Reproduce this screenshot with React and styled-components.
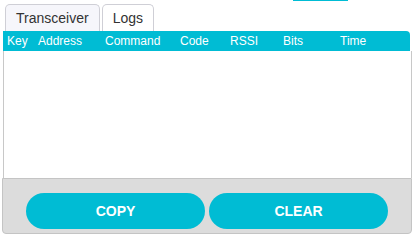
import React from "react";
import styled, { createGlobalStyle } from "styled-components";

const GlobalStyle = createGlobalStyle`
  html, body {
    margin: 0;
    padding: 0;
    background: #ffffff;
    font-family: "Liberation Sans", Arial, sans-serif;
  }
`;

const Page = styled.div`
  width: 415px;
  height: 238px;
  overflow: hidden;
  background: #ffffff;
`;

const TopStrip = styled.div`
  height: 4px;
  display: flex;
  align-items: flex-start;
`;

const TopMarker = styled.div`
  margin-left: 293px;
  width: 55px;
  height: 1px;
  background: #00bcd4;
`;

const TabRow = styled.div`
  display: flex;
  gap: 2px;
  padding-left: 5px;
`;

const Tab = styled.div`
  height: 26px;
  padding: 0 10px;
  display: flex;
  align-items: center;
  font-size: 14px;
  color: #333333;
  border: 1px solid #cfcfd6;
  border-bottom: none;
  border-radius: 5px 5px 0 0;
  background: ${(p) => (p.$active ? "#f6f6fb" : "#ffffff")};
`;

const Panel = styled.div`
  margin-left: 2px;
  width: 410px;
  display: flex;
  flex-direction: column;
`;

const HeaderRow = styled.div`
  margin-left: 1px;
  width: 407px;
  height: 20px;
  padding-left: 4px;
  box-sizing: border-box;
  background: #00bcd4;
  border-radius: 0 4px 0 0;
  display: grid;
  grid-template-columns: 31px 67px 75px 50px 53px 57px 1fr;
  align-items: center;
  color: #ffffff;
  font-size: 12px;
`;

const HeaderCell = styled.span`
  white-space: nowrap;
`;

const Body = styled.div`
  margin-left: 1px;
  width: 409px;
  height: 127px;
  box-sizing: border-box;
  border-left: 1px solid #c8c8c8;
  border-right: 1px solid #c8c8c8;
  background: #ffffff;
`;

const Footer = styled.div`
  height: 56px;
  box-sizing: border-box;
  background: #dcdcdc;
  border: 1px solid #c4c4c4;
  border-radius: 0 0 4px 4px;
  padding: 14px 23px 4px;
  display: flex;
  gap: 4px;
`;

const ActionButton = styled.button`
  flex: 1;
  height: 36px;
  border: none;
  border-radius: 18px;
  background: #00bcd4;
  color: #ffffff;
  font-family: "Liberation Sans", Arial, sans-serif;
  font-size: 14px;
  font-weight: bold;
  cursor: pointer;
`;

const columns = ["Key", "Address", "Command", "Code", "RSSI", "Bits", "Time"];

export default function App() {
  return (
    <Page>
      <GlobalStyle />
      <TopStrip>
        <TopMarker />
      </TopStrip>
      <TabRow>
        <Tab $active>Transceiver</Tab>
        <Tab>Logs</Tab>
      </TabRow>
      <Panel>
        <HeaderRow>
          {columns.map((c) => (
            <HeaderCell key={c}>{c}</HeaderCell>
          ))}
        </HeaderRow>
        <Body />
        <Footer>
          <ActionButton>COPY</ActionButton>
          <ActionButton>CLEAR</ActionButton>
        </Footer>
      </Panel>
    </Page>
  );
}
